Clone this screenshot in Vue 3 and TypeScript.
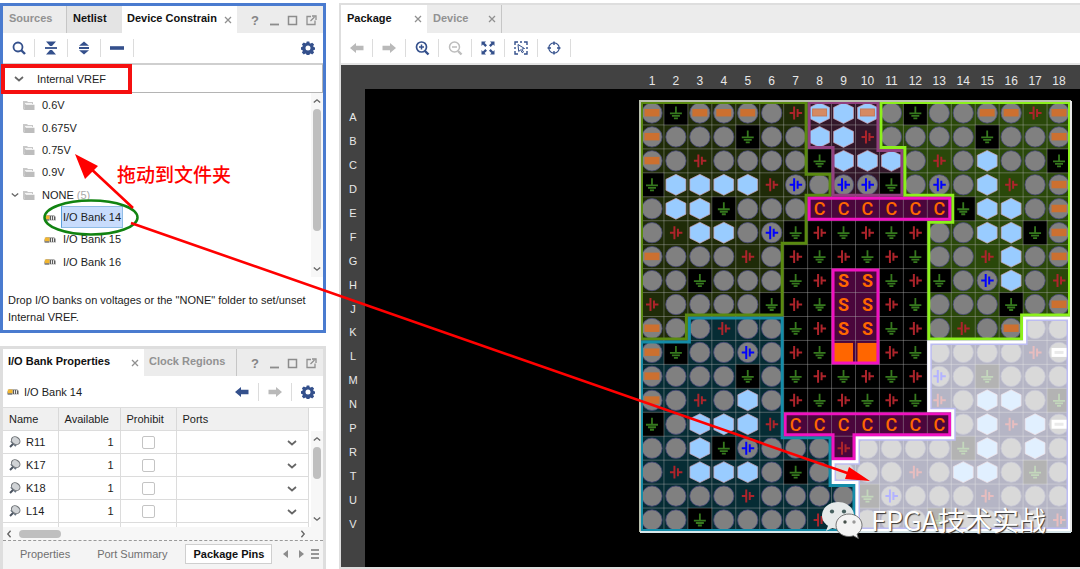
<script setup lang="ts">
import { ref } from 'vue'

interface Region { name: string; path: string }

const rowNames = 'ABCDEFGHJKLMNPRTUV'.split('')
const columns = Array.from({ length: 18 }, (_, i) => i + 1)

// o ball, r ball with tag, w selected tagged ball, g ground, p power, b reference supply,
// h clock-capable pin, x tagged clock-capable pin, C/S/q configuration pins
const pinRows: string[] = [
  'rgrrropxhxogoorrpr',
  'rooogoohhpoooogoor',
  'ropooooghhhopohoog',
  'ghhhhpbobbgobohpor',
  'ohhgoooCCCCCCghhor',
  'ophhobgpgpgpoohhgr',
  'rooopopgpgpgoophor',
  'oogooogpSSgpgobhop',
  'poooogpgSSpgooogor',
  'roopoogpSSgpoporoo',
  'rgoobopgqqpgoooopw',
  'rooogogpgpgpbogooo',
  'ropohopgpgpgpohhog',
  'gohhhpCCCCCCCohphw',
  'oohgbooopooooghoho',
  'ophhhogoooopohhogo',
  'oooopoooogbooopooo',
  'oogoooopoooogoooop',
]

const pins = pinRows.flatMap((row, y) =>
  row.split('').map((kind, x) => ({ kind, x: x * 24 + 12, y: y * 24 + 12, id: rowNames[y] + (x + 1) })),
)
const has = (kind: string, set: string) => set.includes(kind)

const regions: Region[] = [
  { name: 'olive', path: 'M0 0H168V72H192V96H168V144H144V216H48V240H0Z' },
  { name: 'purple', path: 'M168 0H240V48H264V96H192V48H168Z' },
  { name: 'lime', path: 'M240 0H432V216H384V240H288V120H312V96H264V48H240Z' },
  { name: 'teal', path: 'M48 216H144V336H192V384H216V432H0V240H48Z' },
  { name: 'picked', path: 'M384 216H432V432H216V384H192V360H216V336H312V312H288V240H384Z' },
  { name: 'config', path: 'M168 96H312V120H168Z' },
  { name: 'config', path: 'M192 168H240V264H192Z' },
  { name: 'config', path: 'M144 312H312V336H216V360H192V336H144Z' },
]

const voltages = ['0.6V', '0.675V', '0.75V', '0.9V']
const banks = ['I/O Bank 14', 'I/O Bank 15', 'I/O Bank 16']
const selectedBank = ref('I/O Bank 14')
const packagePins = ref([
  { name: 'R11', available: 1, prohibit: false },
  { name: 'K17', available: 1, prohibit: false },
  { name: 'K18', available: 1, prohibit: false },
  { name: 'L14', available: 1, prohibit: false },
])
</script>

<template>
  <svg class="defs" aria-hidden="true">
    <defs>
      <symbol id="gear" viewBox="0 0 14 14">
        <path fill="#34508c" fill-rule="evenodd" d="M5.7 0.5h2.6l.4 1.7 1 .4 1.5-.9 1.9 1.9-.9 1.5.4 1 1.7.4v2.2l-1.7.4-.4 1 .9 1.5-1.9 1.9-1.5-.9-1 .4-.4 1.7H5.700l-.4-1.700-1-.4-1.500.9-1.900-1.900.9-1.500-.4-1L-.3 8.700V6.200l1.700-.4.4-1-.9-1.500 1.900-1.900 1.500.9 1-.4zM7 4.600a2.500 2.500 0 1 0 0 5 2.500 2.500 0 0 0 0-5z" />
      </symbol>
      <symbol id="close" viewBox="0 0 8 8"><path d="M1 1l6 6M7 1L1 7" stroke="#909090" stroke-width="1.3" /></symbol>
      <symbol id="down" viewBox="0 0 10 6"><path d="M1 1l4 3.500L9 1" fill="none" stroke="currentColor" stroke-width="1.700" /></symbol>
      <symbol id="arrow" viewBox="0 0 14 10"><path d="M0 5l6-5v2.700h7.500v4.600H6V10z" fill="currentColor" /></symbol>
      <symbol id="window" viewBox="0 0 66 12">
        <path d="M19 10.500h9" stroke="#8c8c8c" stroke-width="1.800" />
        <path d="M37.500 2.500h8v8h-8z" fill="none" stroke="#8c8c8c" stroke-width="1.500" />
        <path d="M60 2.500h-4v8h8V6.500M59.500 7l4-4M61 2h4v4" fill="none" stroke="#909090" stroke-width="1.300" />
        <text x="0" y="11" font-size="13" font-weight="700" fill="#858585">?</text>
      </symbol>
      <symbol id="folder" viewBox="0 0 12 10">
        <path d="M0 10V1h4l1 1h5v2H3L1 9z" fill="#c8c8c8" />
        <path d="M2 4.800H11.500V10H1z" fill="#bdbdbd" />
        <path d="M2 3.500h7" stroke="#f4f4f4" />
      </symbol>
      <symbol id="bank" viewBox="0 0 12 7">
        <path d="M0 6.500V4l2-3h8l2 2v3.500z" fill="#b0b0b0" />
        <path d="M.8 1.500h4.700v3.800H.8z" fill="#f1b52f" />
        <path d="M1 6h4M6.500 2v4M8.500 2v4M10.500 2.500v3.500" stroke="#5c5c5c" />
        <path d="M7.500 2.500v3M9.500 2.500v3" stroke="#eee" />
      </symbol>
      <symbol id="pin" viewBox="0 0 12 12">
        <path d="M4.500 7.500L1 11" stroke="#4b5460" stroke-width="2" />
        <path d="M2 5l5 5" stroke="#687482" stroke-width="2" />
        <ellipse cx="6.700" cy="4.700" rx="4.500" ry="3.600" transform="rotate(35 6.700 4.700)" fill="#d0d3d6" stroke="#707478" />
      </symbol>
    </defs>
  </svg>

  <main class="workspace">
    <aside class="side">
      <section class="panel constraints">
        <nav class="tabs">
          <button class="tab sources">Sources</button>
          <button class="tab netlist">Netlist</button>
          <button class="tab active device">Device Constrain <svg class="x"><use href="#close" /></svg></button>
          <svg class="window"><use href="#window" /></svg>
        </nav>
        <div class="toolbar">
          <button aria-label="Search"><svg class="i16" viewBox="0 0 16 16"><circle cx="7" cy="7" r="4.500" fill="none" stroke="#34508c" stroke-width="1.800" /><path d="M10 10l4 4" stroke="#34508c" stroke-width="2.400" /></svg></button>
          <button aria-label="Collapse all"><svg class="i16" viewBox="0 0 16 16"><path d="M2 8h12" stroke="#34508c" stroke-width="1.800" /><path d="M3 1.500h10L9 6H7zM3 14.500h10L9 10H7z" fill="#34508c" /></svg></button>
          <button aria-label="Expand all"><svg class="i16" viewBox="0 0 16 16"><path d="M3 5.800l5-4.300 5 4.300zM3 10.200l5 4.300 5-4.300zM3 7.100h10v1.800H3z" fill="#34508c" /></svg></button>
          <button aria-label="Remove"><svg class="i16" viewBox="0 0 16 16"><path d="M1 8h14" stroke="#34508c" stroke-width="3.600" /></svg></button>
          <button class="settings" aria-label="Settings"><svg class="gear"><use href="#gear" /></svg></button>
        </div>
        <button class="vref"><svg class="down"><use href="#down" /></svg>Internal VREF</button>
        <div class="tree-area">
          <ul class="tree">
            <li v-for="v in voltages" :key="v"><svg class="folder"><use href="#folder" /></svg>{{ v }}</li>
            <li class="open"><svg class="down small"><use href="#down" /></svg><svg class="folder"><use href="#folder" /></svg>NONE&nbsp;<span class="count">(5)</span></li>
            <li v-for="b in banks" :key="b" class="leaf">
              <svg class="bank"><use href="#bank" /></svg>
              <button class="bank-name" :class="{ selected: b === selectedBank }" @click="selectedBank = b">{{ b }}</button>
            </li>
          </ul>
          <div class="vscroll"><svg class="tip turn-up"><use href="#down" /></svg><i class="thumb long"></i><svg class="tip"><use href="#down" /></svg></div>
        </div>
        <p class="hint">Drop I/O banks on voltages or the "NONE" folder to set/unset Internal VREF.</p>
      </section>

      <section class="panel properties">
        <nav class="tabs">
          <button class="tab active props">I/O Bank Properties <svg class="x"><use href="#close" /></svg></button>
          <button class="tab clock">Clock Regions</button>
          <svg class="window"><use href="#window" /></svg>
        </nav>
        <div class="toolbar heading">
          <svg class="bank"><use href="#bank" /></svg><span>I/O Bank 14</span>
          <button class="back" aria-label="Back"><svg class="arrow"><use href="#arrow" /></svg></button>
          <button class="forward" aria-label="Forward"><svg class="arrow flip"><use href="#arrow" /></svg></button>
          <button class="settings" aria-label="Settings"><svg class="gear"><use href="#gear" /></svg></button>
        </div>
        <div class="table-area">
          <div class="table-clip">
            <table>
              <thead><tr><th class="c-name">Name</th><th class="c-avail">Available</th><th class="c-pro">Prohibit</th><th>Ports</th></tr></thead>
              <tbody>
                <tr v-for="p in packagePins" :key="p.name">
                  <td><svg class="pin"><use href="#pin" /></svg>{{ p.name }}</td>
                  <td class="num">{{ p.available }}</td>
                  <td class="mid"><input v-model="p.prohibit" type="checkbox" :aria-label="'Prohibit ' + p.name"></td>
                  <td class="ports"><button :aria-label="'Ports of ' + p.name"><svg class="down"><use href="#down" /></svg></button></td>
                </tr>
                <tr><td></td><td></td><td></td><td></td></tr>
              </tbody>
            </table>
          </div>
          <div class="vscroll lower"><svg class="tip turn-up"><use href="#down" /></svg><i class="thumb"></i><svg class="tip"><use href="#down" /></svg></div>
        </div>
        <div class="hscroll"><svg class="tip turn-left"><use href="#down" /></svg><i></i><svg class="tip turn-right"><use href="#down" /></svg></div>
        <nav class="subtabs">
          <button>Properties</button><button>Port Summary</button><button class="current">Package Pins</button>
          <svg class="nav" viewBox="0 0 38 12"><path d="M7 2v8L2 6zM18 2v8l5-4z" fill="#8c8c8c" /><path d="M30 2h8M30 6h8M30 10h8" stroke="#777" stroke-width="1.500" /></svg>
        </nav>
      </section>
    </aside>

    <section class="viewer">
      <nav class="tabs">
        <button class="tab active package">Package <svg class="x"><use href="#close" /></svg></button>
        <button class="tab dev">Device <svg class="x"><use href="#close" /></svg></button>
      </nav>
      <div class="toolbar">
        <button class="forward" aria-label="Back"><svg class="arrow"><use href="#arrow" /></svg></button>
        <button class="forward" aria-label="Forward"><svg class="arrow flip"><use href="#arrow" /></svg></button>
        <button aria-label="Zoom in"><svg class="i16" viewBox="0 0 16 16"><circle cx="7.500" cy="7" r="5" fill="none" stroke="#34508c" stroke-width="1.700" /><path d="M11 11l3.500 3.500" stroke="#34508c" stroke-width="2.400" /><path d="M5 7h5M7.500 4.500v5" stroke="#34508c" stroke-width="1.500" /></svg></button>
        <button aria-label="Zoom out"><svg class="i16" viewBox="0 0 16 16"><circle cx="7.500" cy="7" r="5" fill="none" stroke="#bdbdbd" stroke-width="1.500" /><path d="M11 11l3.500 3.500" stroke="#bdbdbd" stroke-width="2.400" /><path d="M5 7h5" stroke="#bdbdbd" stroke-width="1.500" /></svg></button>
        <button aria-label="Fit"><svg class="i16" viewBox="0 0 16 16"><path d="M1.500 1.500h4.500l-1.400 1.400L7 5.300 5.300 7 2.900 4.600 1.500 6zM14.500 1.500v4.500l-1.400-1.400L10.700 7 9 5.300l2.400-2.400L10 1.500zM1.500 14.500v-4.500l1.400 1.400L5.300 9 7 10.700l-2.400 2.400L6 14.500zM14.500 14.500H10l1.400-1.400L9 10.700 10.700 9l2.400 2.400 1.400-1.400z" fill="#34508c" /></svg></button>
        <button aria-label="Fit selection"><svg class="i16" viewBox="0 0 16 16"><path d="M2 5V2h3M11 2h3v3M14 11v3h-3M5 14H2v-3M7 2h2M2 7v2M14 7v2" fill="none" stroke="#34508c" stroke-width="1.400" /><path d="M5 4.500l6.500 4-2.700.6 1.700 2.900-1.300.7-1.600-2.900L5.700 11.500z" fill="#fff" stroke="#34508c" /></svg></button>
        <button aria-label="Center"><svg class="i16" viewBox="0 0 16 16"><circle cx="8" cy="8" r="5.200" fill="none" stroke="#34508c" stroke-width="1.200" /><path d="M8 1.500v3.500M8 11v3.500M1.500 8H5M11 8h3.500" stroke="#34508c" stroke-width="1.400" /></svg></button>
      </div>
      <div class="canvas">
        <div class="ruler-top"><div class="cols"><span v-for="c in columns" :key="c">{{ c }}</span></div></div>
        <div class="ruler-left"><span v-for="r in rowNames" :key="r">{{ r }}</span></div>
        <div class="stage">
          <svg class="chip" viewBox="0 0 432 432" role="img" aria-label="Package pins">
            <defs>
              <clipPath v-for="(r, i) in regions" :id="'clip' + i" :key="i"><path :d="r.path" /></clipPath>
              <g id="ground"><path d="M0 -6.500V1M-6 .5H6M-4 3H4M-2 5.500H2" fill="none" stroke-width="1.800" /></g>
              <g id="power"><path d="M-1.500 -6.500V6.500M2 -4V4M-6 0H-1.500M2 0H6.500" fill="none" stroke-width="2" /></g>
            </defs>
            <rect width="432" height="432" fill="#000" />
            <path v-for="(r, i) in regions" :key="i" :d="r.path" :class="['fill', r.name]" />
            <template v-for="p in pins" :key="p.id">
              <rect v-if="p.kind === 'g'" :x="p.x - 12" :y="p.y - 12" width="24" height="24" fill="#000" />
            </template>
            <path class="lines" d="M24 0V432M48 0V432M72 0V432M96 0V432M120 0V432M144 0V432M168 0V432M192 0V432M216 0V432M240 0V432M264 0V432M288 0V432M312 0V432M336 0V432M360 0V432M384 0V432M408 0V432M0 24H432M0 48H432M0 72H432M0 96H432M0 120H432M0 144H432M0 168H432M0 192H432M0 216H432M0 240H432M0 264H432M0 288H432M0 312H432M0 336H432M0 360H432M0 384H432M0 408H432" />
            <g v-for="p in pins" :key="p.id" :transform="`translate(${p.x} ${p.y})`">
              <circle v-if="has(p.kind, 'orbw')" r="10.200" fill="#808080" stroke="#484878" stroke-width=".8" />
              <path v-if="has(p.kind, 'hx')" d="M0 -10.500L10 -5.500V5.500L0 10.500L-10 5.500V-5.500Z" fill="#99ccff" stroke="#c99eae" stroke-width=".7" />
              <rect v-if="p.kind === 'r'" x="-7.500" y="-4" width="15" height="7.500" fill="#cc7030" />
              <rect v-if="p.kind === 'x'" x="-7" y="-4" width="14" height="7" fill="#d68a62" stroke="#c57b5b" />
              <use v-if="p.kind === 'g'" href="#ground" stroke="#36791e" />
              <use v-if="p.kind === 'p'" href="#power" stroke="#ad242b" />
              <use v-if="p.kind === 'b'" href="#power" stroke="#0000ff" />
              <rect v-if="p.kind === 'q'" x="-10" y="-9.500" width="19.500" height="19.500" fill="#ff6600" />
              <text v-if="has(p.kind, 'CS')" :class="['letter', p.kind]" y="6.500">{{ p.kind }}</text>
            </g>
            <path :d="regions[4].path" fill="#fff" opacity=".7" />
            <path :d="regions[4].path" class="inner" clip-path="url(#clip4)" />
            <path v-for="(r, i) in regions" :key="'s' + i" :d="r.path" :class="['edge', r.name]" :clip-path="`url(#clip${i})`" />
            <g v-for="p in pins.filter(q => q.kind === 'w')" :key="'w' + p.id" :transform="`translate(${p.x} ${p.y})`">
              <rect x="-7.500" y="-4.500" width="15" height="9" fill="#fff" /><rect x="-4.500" y="-1.500" width="9" height="3" fill="#eaeaea" />
            </g>
            <path d="M0 432V0H432" fill="none" stroke="#b9bfae" stroke-width="2" />
            <path d="M432 0V432" fill="none" stroke="#e8e8e8" stroke-width="2" />
            <path d="M0 432H432" fill="none" stroke="#d8e6ea" stroke-width="2" />
          </svg>
        </div>
      </div>
    </section>

    <div class="vref-mark"></div>
    <svg class="notes" viewBox="0 0 1080 569" aria-hidden="true">
      <ellipse cx="91" cy="217.500" rx="46.500" ry="17" fill="none" stroke="#118311" stroke-width="2.500" />
      <path d="M133 208L88 166M131 223L850 474" stroke="#f00" stroke-width="2.600" />
      <path d="M75 154L98 166L85 179ZM870 481L845 479L849 467Z" fill="#f00" />
    </svg>
    <p class="drag-note">拖动到文件夹</p>
    <div class="watermark">
      <svg viewBox="0 0 42 38"><path d="M17 1C8 1 1 7 1 14.500c0 4.500 2.500 8 6 10.300L5 30l6-3c2 .6 4 .9 6 .9 9 0 16-6 16-13.400S26 1 17 1z" fill="#e6eaea" /><circle cx="11" cy="10.500" r="2.100" fill="#46605f" /><circle cx="23" cy="10.500" r="2.100" fill="#46605f" /><path d="M28 13c-7.300 0-13 5-13 11.200s5.700 11.300 13 11.300c1.600 0 3-.2 4.400-.7l5 2.700-1.400-4.300c3-2 5-5.300 5-9C41 18 35.300 13 28 13z" fill="#f3f3f3" stroke="#666" stroke-width=".9" /><circle cx="24" cy="21" r="1.700" fill="#46514b" /><circle cx="33" cy="21" r="1.700" fill="#999" /></svg>
      <span>FPGA技术实战</span>
    </div>
  </main>
</template>

<style>
body { margin: 0; background: #fff; }
</style>

<style scoped>
* { box-sizing: border-box; }
button { font: inherit; color: inherit; border: 0; background: none; padding: 0; margin: 0; }
svg { flex: none; display: block; }
.defs { position: absolute; width: 0; height: 0; }
.workspace { position: relative; display: flex; gap: 13px; min-height: 100vh; padding-top: 3px; font: 11px/16px "Liberation Sans", Arial, sans-serif; color: #1c1c1c; overflow: hidden; }
.side { width: 326px; flex: none; display: flex; flex-direction: column; gap: 13px; }
.panel { border: 3px solid #dedede; background: #fff; display: flex; flex-direction: column; }
.constraints { border-color: #4a7bcf; height: 330px; }
.properties { flex: 1; border-bottom: 0; }
.tabs { display: flex; height: 27px; background: #ececec; font-weight: 700; flex: none; }
.tab { display: flex; align-items: center; padding: 0 6px 3px; color: #929292; white-space: nowrap; }
.tab.active { background: #fff; color: #111; padding-right: 5px; justify-content: space-between; }
.sources { width: 64px; border-right: 1px solid #c6c6c6; }
.netlist { width: 55px; background: #e4e4e4; color: #111; }
.tab.device { width: 115px; padding-left: 5px; }
.tab.props { width: 141px; padding-left: 5px; }
.clock { width: 93px; border-right: 1px solid #c6c6c6; padding-left: 5px; }
.package { width: 86px; }
.dev { width: 75px; border-right: 1px solid #c6c6c6; padding-right: 5px; justify-content: space-between; }
.x { width: 8px; height: 8px; margin-top: 3px; }
.window { width: 66px; height: 12px; margin: 8px 6px 0 auto; }
.toolbar { display: flex; align-items: center; height: 30px; flex: none; }
.toolbar button { width: 33px; height: 18px; display: flex; align-items: center; justify-content: center; border-right: 1px solid #dcdcdc; }
.toolbar button:first-child { width: 32px; }
.toolbar .settings { margin-left: auto; width: 31px; border-right: 0; }
.i16 { width: 16px; height: 16px; }
.gear { width: 14px; height: 14px; overflow: visible; }
.vref { height: 30px; flex: none; display: flex; align-items: center; gap: 13px; padding-left: 11px; border: 1px solid #b4b4b4; border-top: 2px solid #cfcfcf; border-left: 0; }
.down { width: 10px; height: 6px; color: #666; }
.tree-area { display: flex; height: 184px; }
.tree { flex: 1; list-style: none; margin: 1px 0 0; padding: 0; height: 179px; display: grid; grid-auto-rows: 1fr; }
.tree li { display: flex; align-items: center; padding-left: 20px; }
.tree .open { padding-left: 8px; }
.tree .small { width: 8px; height: 6px; margin-right: 4px; }
.folder { width: 12px; height: 10px; margin-right: 7px; }
.tree .leaf { padding-left: 41px; }
.bank { width: 12px; height: 7px; margin-right: 5px; }
.bank-name { height: 22px; padding: 0 1px; border: 1px solid transparent; }
.selected { background: #c8dcfc; border-color: #8fbce6; border-left-color: #5aa0dc; }
.count { color: #aaa; }
.vscroll { width: 12px; background: #f7f7f7; display: flex; flex-direction: column; align-items: center; padding: 5px 0; }
.tip { width: 8px; height: 6px; color: #666; }
.turn-up { transform: rotate(180deg); }
.turn-left { transform: rotate(90deg); }
.turn-right { transform: rotate(-90deg); }
.thumb { width: 8px; height: 32px; border-radius: 4px; background: #bfbfbf; margin: 5px 0 auto; }
.thumb.long { height: 122px; }
.hint { margin: 0; padding: 15px 2px 0 5px; line-height: 17px; }
.heading { padding-left: 4px; height: 31px; }
.heading .back { margin-left: auto; }
.heading .settings { margin-left: 0; }
.arrow { width: 14px; height: 10px; color: #34508c; }
.forward .arrow { color: #b9b9b9; }
.flip { transform: scaleX(-1); }
.table-area { display: flex; height: 120px; border-top: 1px solid #ddd; }
.table-clip { flex: 1; overflow: hidden; }
table { width: 100%; table-layout: fixed; border-collapse: collapse; }
th { height: 22px; padding: 0 6px; text-align: left; font-weight: 400; background: #f0f0f0; border-right: 1px solid #d9d9d9; }
td { height: 23px; padding: 0 6px; border: 1px solid #dcdcdc; border-left: 0; }
.c-name { width: 55px; } .c-avail { width: 62px; } .c-pro { width: 56px; }
.num { text-align: right; }
.mid { text-align: center; }
.pin { display: inline-block; width: 12px; height: 12px; margin-right: 5px; vertical-align: -2px; }
input { appearance: none; width: 13px; height: 13px; margin: 0; border: 1px solid #c4c4c4; border-radius: 2px; background: #fff; vertical-align: middle; }
.ports { text-align: right; padding-right: 11px; }
.ports button { display: inline-block; vertical-align: middle; }
.lower { margin: 23px 0 0 2px; }
.hscroll { height: 14px; display: flex; align-items: center; background: #f7f7f7; border-bottom: 1px dashed #999; padding: 0 16px 0 2px; }
.hscroll i { width: 42px; height: 8px; border-radius: 4px; background: #bfbfbf; margin: 0 auto 0 6px; }
.subtabs { flex: 1; display: flex; align-items: flex-start; padding: 3px 4px 0 8px; background: #f4f4f4; color: #707070; }
.subtabs button { height: 20px; padding: 0 9px; margin-right: 9px; }
.subtabs .current { background: #fff; border: 1px solid #cfcfcf; color: #111; font-weight: 700; padding: 0 7px; margin: 0; }
.nav { width: 38px; height: 12px; margin: 4px 0 0 auto; }
.viewer { flex: 1; min-width: 0; display: flex; flex-direction: column; border: solid #dedede; border-width: 2px 0 2px 2px; }
.viewer .tabs { height: 28px; }
.canvas { flex: 1; display: grid; grid-template: 24px 1fr / 24px 1fr; border-top: 2px solid #e4e4e4; background: #424242; color: #e8e8e8; }
.ruler-top { grid-column: 1 / 3; display: flex; justify-content: flex-end; padding: 7px 9px 0 0; align-items: center; }
.cols { width: 431px; display: grid; grid-template-columns: repeat(18, 1fr); text-align: center; font-size: 12px; }
.ruler-left { display: grid; grid-template-rows: repeat(18, 1fr); height: 431px; margin-top: 16px; text-align: center; align-items: center; }
.stage { background: #000; display: flex; justify-content: flex-end; align-items: flex-start; padding: 12px 9px 0 0; }
.chip { width: 431px; height: 431px; overflow: visible; }
.lines { stroke: #b0b0b0; stroke-opacity: .42; stroke-width: 1; fill: none; }
.fill.olive { fill: #1f2b08; } .fill.purple { fill: #321729; } .fill.lime { fill: #2a480a; }
.fill.teal { fill: #062c34; } .fill.picked { fill: #08083c; } .fill.config { fill: #4a063c; }
.edge { fill: none; stroke-width: 6; }
.edge.olive { stroke: #5a8a10; } .edge.purple { stroke: #91407f; } .edge.lime { stroke: #8cf01c; }
.edge.teal { stroke: #148ca8; } .edge.picked { stroke: #fff; } .edge.config { stroke: #f012c0; }
.inner { fill: none; stroke: #bcbcf2; stroke-width: 9; }
.letter { fill: #ff6600; font: 500 18px Roboto, sans-serif; text-anchor: middle; }
.letter.S { font-weight: 700; }
.vref-mark { position: absolute; left: 1px; top: 64px; width: 131px; height: 30px; border: 4px solid #f51010; pointer-events: none; }
.notes { position: absolute; left: 0; top: 0; width: 1080px; height: 569px; pointer-events: none; }
.drag-note { position: absolute; left: 117px; top: 165px; margin: 0; font: 500 19px/22px "Liberation Serif", "Noto Sans CJK SC", serif; color: #f00; }
.watermark { position: absolute; left: 821px; top: 501px; display: flex; gap: 8px; }
.watermark svg { width: 42px; height: 38px; }
.watermark span { font: 27px/38px "Noto Sans CJK SC", sans-serif; color: #fff; text-shadow: 1px 1px 1px #333; white-space: nowrap; }
</style>
